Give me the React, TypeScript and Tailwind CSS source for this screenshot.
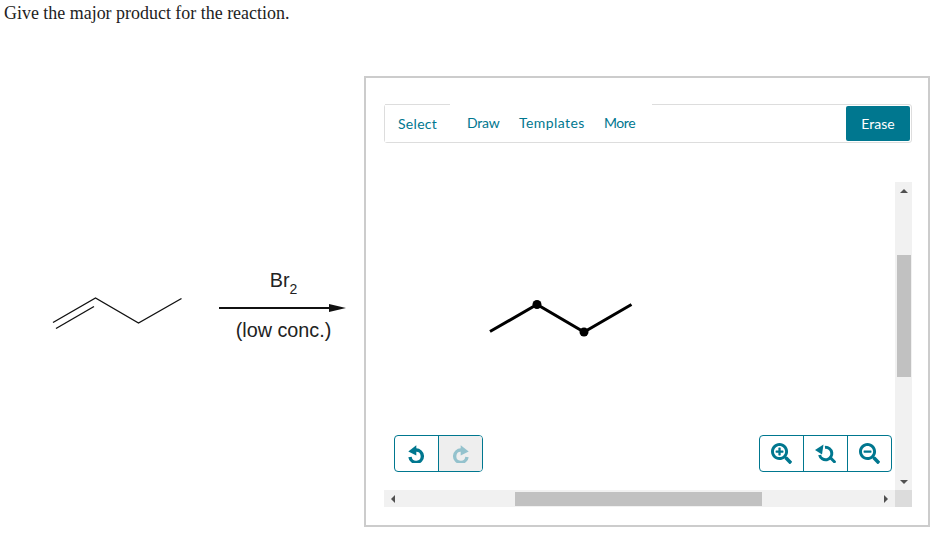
import { FaSearchPlus, FaSearchMinus } from "react-icons/fa";

const Reactant = () => (
  <svg width="136" height="40" viewBox="50 288 136 40" className="shrink-0" fill="none" stroke="#111" strokeWidth="1.4">
    <path d="M53 318.5 L95.5 294 L138.5 319 L181.5 294.5" />
    <path d="M56 324.5 L94 302.5" />
  </svg>
);

const Product = () => (
  <svg width="150" height="40" viewBox="485 298 150 40" className="absolute left-[101px] top-[116px]" fill="none" stroke="#000" strokeWidth="3">
    <path d="M490 331.5 L537 304.5 L584 332 L631.5 304.5" />
    <circle cx="537" cy="304.5" r="4.5" fill="#000" stroke="none" />
    <circle cx="584" cy="332" r="4.5" fill="#000" stroke="none" />
  </svg>
);

const UndoIcon = ({ flip }: { flip?: boolean }) => (
  <svg width="17" height="18" viewBox="0 0 17 18" fill="currentColor" className={flip ? "-scale-x-100" : ""}>
    <path d="M8 5 A6.2 6.2 0 1 1 2 12" fill="none" stroke="currentColor" strokeWidth="3.4" />
    <path d="M0.3 6.5 L8.3 0.3 L8.3 10.5 Z" />
  </svg>
);

const ZoomReset = () => (
  <svg width="21" height="19" viewBox="0 0 21 19" fill="none" stroke="#00778f" strokeWidth="3">
    <path d="M10 3.4 A6.2 6.2 0 1 1 4.6 11" />
    <path d="M15.4 13.8 L19.4 17.8" strokeLinecap="round" />
    <path d="M0 6 L8.5 0.5 L7 10.5 Z" fill="#00778f" stroke="none" />
  </svg>
);

export default function App() {
  return (
    <div className="w-[933px] h-[548px] overflow-hidden bg-white">
      <h1 className="h-[76px] pl-[4px] pt-[3px] font-['Liberation_Serif',serif] text-[17.95px] leading-[20px] font-normal text-[#222]">
        Give the major product for the reaction.
      </h1>
      <div className="flex">
        <section className="w-[364px] h-[451px] pl-[50px] pt-[188px] flex items-start gap-[33px] font-['Liberation_Sans',sans-serif] text-[19.8px] text-[#222]">
          <div className="pt-[28px]"><Reactant /></div>
          <div className="flex flex-col w-[127px] items-center">
            <div className="leading-[22px] h-[30px] pt-[5px] ml-[2px]">
              Br<sub className="text-[14px] leading-none align-[-3px]">2</sub>
            </div>
            <svg width="127" height="10" viewBox="0 0 127 10" className="mt-[9px]">
              <path d="M0 5 H114" stroke="#111" strokeWidth="1.8" />
              <path d="M110 1 L127 5 L110 9 Z" fill="#111" />
            </svg>
            <div className="leading-[22px] mt-[6px] ml-[2px] whitespace-nowrap">(low conc.)</div>
          </div>
        </section>

        <section className="w-[566px] h-[451px] border-2 border-[#cccccc] pt-[26px] pl-[18px] pr-[16px] font-['Lato',sans-serif] text-[14px] text-[#00778f]">
          <div className="h-[39px] border border-[#dddddd] rounded-[3px] flex items-stretch justify-between">
            <div className="flex bg-white -mt-px h-[38px] w-[267px] items-center ml-0 border-t border-t-transparent">
              <span className="w-[65px] pl-[13px] pt-[1px] border-t border-[#dddddd] h-[38px] leading-[36px] -mt-px tracking-[0.3px]">Select</span>
              <div className="flex pl-[17px] pb-[2px]">
                <span className="tracking-[-0.25px]">Draw</span>
                <span className="ml-[19.5px] tracking-[0.45px]">Templates</span>
                <span className="ml-[19px] tracking-[-0.4px]">More</span>
              </div>
            </div>
            <button className="w-[64px] h-[35px] mt-[1px] mr-[1px] bg-[#00778f] text-white rounded-[2px]">Erase</button>
          </div>

          <div className="relative h-[325px] mt-[39px] flex flex-col">
            <div className="flex flex-1 min-h-0">
              <div className="flex-1" />
              <div className="w-[17px] bg-[#f1f1f1] flex flex-col items-center">
                <div className="h-[17px] flex items-center justify-center">
                  <span className="border-x-[4px] border-x-transparent border-b-[4px] border-b-[#505050]" />
                </div>
                <div className="w-[14px] h-[122px] mt-[56px] bg-[#c1c1c1]" />
                <div className="flex-1" />
                <div className="h-[17px] flex items-center justify-center">
                  <span className="border-x-[4px] border-x-transparent border-t-[4px] border-t-[#505050]" />
                </div>
              </div>
            </div>
            <div className="h-[17px] flex">
              <div className="flex-1 bg-[#f1f1f1] flex items-center relative">
                <span className="ml-[7px] border-y-[4px] border-y-transparent border-r-[4px] border-r-[#505050]" />
                <div className="ml-[120px] w-[247px] h-[14px] bg-[#c1c1c1]" />
                <div className="flex-1" />
                <span className="mr-[7px] border-y-[4px] border-y-transparent border-l-[4px] border-l-[#505050]" />
              </div>
              <div className="w-[17px] bg-[#dcdcdc]" />
            </div>

            <Product />

            <div className="absolute left-[10px] top-[253px] flex h-[37px] w-[89px] rounded-[4px] border border-[#00778f] overflow-hidden">
              <button className="w-[44px] flex items-center justify-center border-r border-[#00778f] text-[#00778f]">
                <UndoIcon />
              </button>
              <button className="flex-1 flex items-center justify-center bg-[#eeeeee] text-[#94c2cd]">
                <UndoIcon flip />
              </button>
            </div>
            <div className="absolute left-[375px] top-[253px] flex h-[37px] w-[133px] rounded-[4px] border border-[#00778f] text-[#00778f]">
              <button className="w-[44px] flex items-center justify-center border-r border-[#00778f]">
                <FaSearchPlus size={21} />
              </button>
              <button className="w-[44px] flex items-center justify-center border-r border-[#00778f]">
                <ZoomReset />
              </button>
              <button className="flex-1 flex items-center justify-center">
                <FaSearchMinus size={21} />
              </button>
            </div>
          </div>
        </section>
      </div>
    </div>
  );
}
